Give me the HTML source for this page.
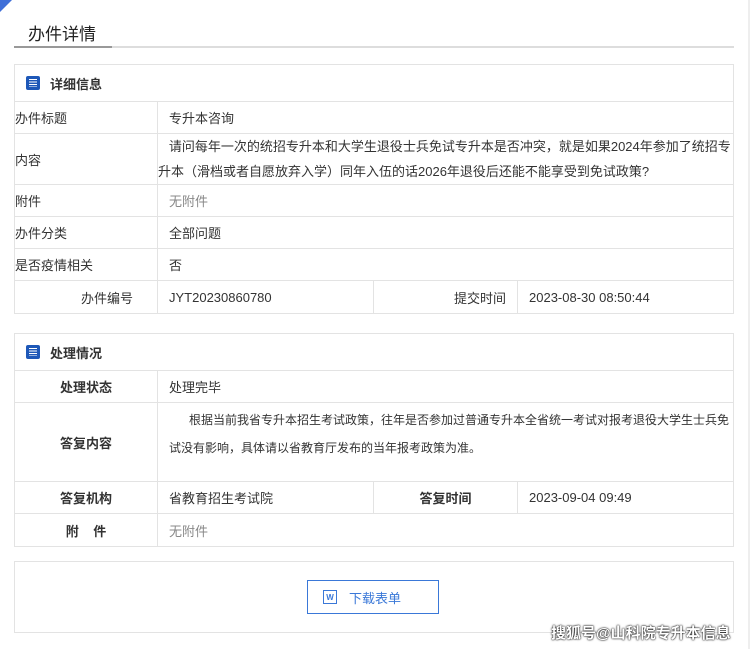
<!DOCTYPE html>
<html><head><meta charset="utf-8"><style>
*{margin:0;padding:0;box-sizing:border-box}
body{width:750px;height:649px;background:#fff;font-family:"Liberation Sans","Noto Sans CJK SC",sans-serif;font-size:13px;color:#333;position:relative;overflow:hidden}
.corner{position:absolute;left:0;top:0;width:0;height:0;border-top:12px solid #3f6fd8;border-right:12px solid transparent}
.rs{position:absolute;right:0;top:0;width:2px;height:649px;background:#eee}
.title{position:absolute;left:28px;top:20px;font-size:17px;color:#222}
.ul{position:absolute;left:14px;top:46px;width:720px;height:2px;background:#ddd}
.ul i{display:block;width:98px;height:2px;background:#999}
.p{position:absolute;left:14px;width:720px;border:1px solid #e3e3e3}
.h{height:37px;border-bottom:1px solid #e3e3e3;font-weight:bold;font-size:13px;display:flex;align-items:center;padding-left:11px;color:#333}
.ic{width:14px;height:14px;background:#1e58b8;border-radius:2px;margin-right:10px;position:relative}
.ic:after{content:"";position:absolute;left:3px;top:3px;width:8px;height:8px;background:repeating-linear-gradient(#fff 0 1px,#1e58b8 1px 2.5px)}
.r{display:flex;border-bottom:1px solid #e3e3e3}
.r:last-child{border-bottom:none}
.c{display:flex;align-items:center;border-right:1px solid #e3e3e3}
.c:last-child{border-right:none}
.l{width:143px}
.v{padding-left:11px}
.b{font-weight:bold;justify-content:center}
.g{color:#888}
.btn{position:absolute;left:292px;top:18px;width:132px;height:34px;border:1px solid #3a78d8;color:#3a78d8;font-size:13px;display:flex;align-items:center;padding-left:15px}
.w{width:14px;height:14px;border:1px solid #3a78d8;font-size:8px;font-weight:bold;display:flex;align-items:center;justify-content:center;margin-right:12px}
.wm{position:absolute;left:551px;top:622px;font-size:15px;font-weight:bold;color:#fff;text-shadow:0 0 2px #000,0 0 1px #000}
</style></head><body>
<div class="corner"></div><div class="rs"></div>
<div class="title">办件详情</div>
<div class="ul"><i></i></div>
<div class="p" style="top:64px">
<div class="h"><span class="ic"></span>详细信息</div>
<div class="r" style="height:32px"><div class="c l">办件标题</div><div class="c v">专升本咨询</div></div>
<div class="r" style="height:51px"><div class="c l">内容</div><div class="c" style="flex:1;line-height:25px;padding:0;white-space:nowrap"><div>&nbsp;&nbsp;&nbsp;请问每年一次的统招专升本和大学生退役士兵免试专升本是否冲突，就是如果2024年参加了统招专<br>升本（滑档或者自愿放弃入学）同年入伍的话2026年退役后还能不能享受到免试政策?</div></div></div>
<div class="r" style="height:32px"><div class="c l">附件</div><div class="c v g">无附件</div></div>
<div class="r" style="height:32px"><div class="c l">办件分类</div><div class="c v">全部问题</div></div>
<div class="r" style="height:32px"><div class="c l">是否疫情相关</div><div class="c v">否</div></div>
<div class="r" style="height:32px"><div class="c l" style="justify-content:flex-end;padding-right:24px">办件编号</div><div class="c v" style="width:216px">JYT20230860780</div><div class="c" style="width:144px;justify-content:flex-end;padding-right:11px">提交时间</div><div class="c v">2023-08-30 08:50:44</div></div>
</div>
<div class="p" style="top:333px">
<div class="h"><span class="ic"></span>处理情况</div>
<div class="r" style="height:32px"><div class="c l b">处理状态</div><div class="c v">处理完毕</div></div>
<div class="r" style="height:79px"><div class="c l b">答复内容</div><div class="c" style="flex:1;align-items:flex-start;padding:3px 4px 0 11px;line-height:28px;font-size:12px">&nbsp;&nbsp;&nbsp;&nbsp;&nbsp;&nbsp;根据当前我省专升本招生考试政策，往年是否参加过普通专升本全省统一考试对报考退役大学生士兵免试没有影响，具体请以省教育厅发布的当年报考政策为准。</div></div>
<div class="r" style="height:32px"><div class="c l b">答复机构</div><div class="c v" style="width:216px">省教育招生考试院</div><div class="c b" style="width:144px">答复时间</div><div class="c v">2023-09-04 09:49</div></div>
<div class="r" style="height:32px"><div class="c l b">附&nbsp;&nbsp;&nbsp;&nbsp;件</div><div class="c v g">无附件</div></div>
</div>
<div class="p" style="top:561px;height:72px"><div class="btn"><span class="w">W</span>下载表单</div></div>
<div class="wm">搜狐号@山科院专升本信息</div>
</body></html>
